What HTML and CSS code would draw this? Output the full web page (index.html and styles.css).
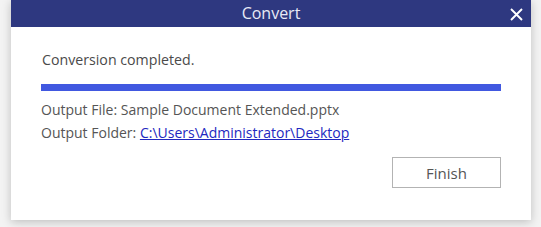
FILE: index.html
```html
<!DOCTYPE html>
<html>
<head>
<meta charset="utf-8">
<link rel="stylesheet" href="styles.css">
</head>
<body>
<div class="dialog">
  <div class="titlebar">
    <span class="title">Convert</span>
    <button class="close" aria-label="Close">
      <svg width="13" height="13" viewBox="0 0 13 13"><path d="M1 1 L12 12 M12 1 L1 12" stroke="#fff" stroke-width="1.9" fill="none"/></svg>
    </button>
  </div>
  <div class="content">
    <p class="status">Conversion completed.</p>
    <div class="progress"><div class="fill"></div></div>
    <p class="line first">Output File: Sample Document Extended.pptx</p>
    <p class="line">Output Folder: <a href="#">C:\Users\Administrator\Desktop</a></p>
    <div class="actions"><button class="finish">Finish</button></div>
  </div>
</div>
</body>
</html>
```
FILE: styles.css
```css
html, body { margin: 0; padding: 0; }
body {
  width: 541px; height: 227px; overflow: hidden;
  background: #f3f3f3;
  font-family: "Open Sans", "Noto Sans", sans-serif;
}
.dialog {
  margin-left: 11px;
  width: 520px;
  height: 220px;
  background: #fff;
  box-shadow: 0 2px 9px rgba(0,0,0,0.22);
  display: flex; flex-direction: column;
}
.titlebar {
  height: 27px;
  background: #2e3880;
  position: relative;
  display: flex; align-items: center; justify-content: center;
}
.title { color: #e8eaf6; font-size: 16px; line-height: 27px; }
.close {
  position: absolute; right: 8px; top: 8px;
  background: none; border: 0; padding: 0; width: 13px; height: 13px;
  display: flex; align-items: center; justify-content: center;
}
.content { padding: 0 30px 0 30px; display: flex; flex-direction: column; }
.status { margin: 24px 0 0 1px; font-size: 14.2px; color: #4a4a4a; line-height: 18px; }
.progress { margin-top: 15px; height: 7px; width: 460px; background: #e5e5e5; }
.fill { height: 100%; width: 100%; background: #4158e0; }
.line { margin: 0; font-size: 14px; color: #555; line-height: 23px; white-space: nowrap; }
.line.first { margin-top: 7px; }
.line a { color: #2228c0; text-decoration: underline; }
.actions { display: flex; justify-content: flex-end; margin-top: 13px; padding-right: 0; }
.finish {
  width: 109px; height: 31px; background: #fff; border: 1px solid #b3b3b3;
  font-family: inherit; font-size: 15px; color: #555;
}
```
